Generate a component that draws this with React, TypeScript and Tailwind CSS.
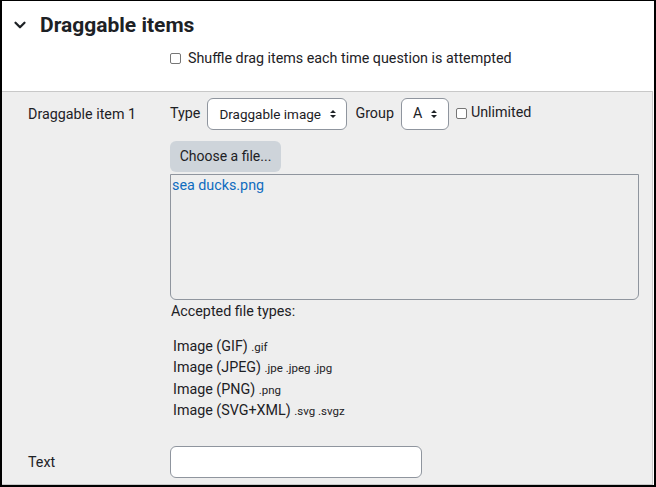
import { ChevronDown } from 'lucide-react';

function SelectArrows() {
  return (
    <svg width="8" height="10" viewBox="0 0 8 10" className="ml-2 text-[#1d2125]">
      <path d="M4 1 L7 4 H1 Z M4 9 L7 6 H1 Z" fill="currentColor" />
    </svg>
  );
}

function Checkbox() {
  return <span className="inline-block w-[11px] h-[11px] rounded-[2px] border border-[#767676] bg-white" />;
}

const types = [
  ['Image (GIF)', '.gif'],
  ['Image (JPEG)', '.jpe .jpeg .jpg'],
  ['Image (PNG)', '.png'],
  ['Image (SVG+XML)', '.svg .svgz'],
];

export default function App() {
  return (
    <div
      className="w-[656px] h-[487px] bg-white border-t border-l-2 border-r-2 border-b-2 border-black text-[#1d2125] text-[14.3px] overflow-hidden flex flex-col"
      style={{ fontFamily: 'Roboto, "Liberation Sans", sans-serif' }}
    >
      <div className="h-[90px] shrink-0">
        <div className="flex items-center pt-[12px] pl-[9px]">
          <ChevronDown size={18} strokeWidth={3} className="text-[#1d2125]" />
          <h3 className="ml-[11px] text-[21px] font-bold leading-[24px]">Draggable items</h3>
        </div>
        <label className="flex items-center gap-[7px] mt-[11px] ml-[168px]">
          <Checkbox />
          <span>Shuffle drag items each time question is attempted</span>
        </label>
      </div>
      <div className="flex-1 bg-[#eeeeee] border-t border-r border-b border-[#c8c8c8] mr-px">
        <div className="flex pt-[6px]">
          <div className="w-[168px] pl-[26px] pt-[6px] leading-[20px]">Draggable item 1</div>
          <div className="flex-1">
            <div className="flex items-center h-[32px]">
              <span className="mr-[7px]">Type</span>
              <div className="h-[32px] w-[140px] flex items-center pl-[11px] bg-white border border-[#8f959e] rounded-[6px] text-[13.5px]">
                Draggable image
                <SelectArrows />
              </div>
              <span className="ml-[8px] mr-[7px]">Group</span>
              <div className="h-[32px] w-[48px] flex items-center pl-[11px] bg-white border border-[#8f959e] rounded-[6px]">
                A
                <SelectArrows />
              </div>
              <label className="flex items-center gap-[4px] ml-[7px] mt-[-2px]">
                <Checkbox />
                <span>Unlimited</span>
              </label>
            </div>
            <button className="mt-[11px] h-[31px] w-[111px] rounded-[6px] bg-[#ced4da] text-[14px]">Choose a file...</button>
            <div className="mt-[2px] h-[126px] w-[469px] border border-[#8f959e] rounded-b-[6px] px-[1px]">
              <span className="text-[#0f6cbf] leading-[20px]">sea ducks.png</span>
            </div>
            <div className="mt-[1px] leading-[20px] pl-px">Accepted file types:</div>
            <ul className="mt-[15px] pl-[3px]">
              {types.map(([name, ext]) => (
                <li key={name} className="h-[21.33px] leading-[21px] whitespace-nowrap">
                  {name} <span className="text-[11.5px] leading-none">{ext}</span>
                </li>
              ))}
            </ul>
          </div>
        </div>
        <div className="flex items-center mt-[25px]">
          <div className="w-[168px] pl-[26px]">Text</div>
          <div className="h-[32px] w-[252px] bg-white border border-[#8f959e] rounded-[6px]" />
        </div>
      </div>
    </div>
  );
}
